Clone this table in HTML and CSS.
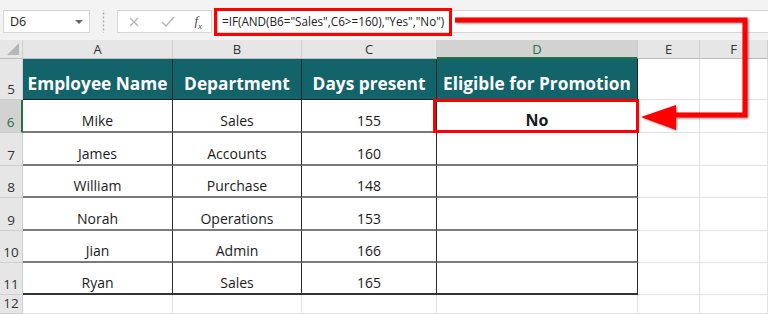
FILE: index.html
```html
<!DOCTYPE html>
<html>
<head>
<meta charset="utf-8">
<link rel="stylesheet" href="styles.css">
</head>
<body>
<div class="app">
  <div class="toolbar">
    <div class="namebox"><span>D6</span><span class="caret"></span></div>
    <div class="grip"></div>
    <div class="fnbox">
      <svg class="ico" width="14" height="14" viewBox="0 0 14 14"><path d="M3 3 L11 11 M11 3 L3 11" stroke="#b5b5b5" stroke-width="1.3" fill="none"/></svg>
      <svg class="ico" width="16" height="14" viewBox="0 0 16 14"><path d="M2 7 L6 11 L14 2" stroke="#b5b5b5" stroke-width="1.5" fill="none"/></svg>
      <span class="fx">f<sub>x</sub></span>
    </div>
    <div class="formula"><span class="hl">=IF(AND(B6="Sales",C6&gt;=160),"Yes","No")</span></div>
  </div>
  <div class="sheet">
    <div class="ch corner"><span class="tri"></span></div>
    <div class="ch">A</div><div class="ch">B</div><div class="ch">C</div><div class="ch sel">D</div><div class="ch">E</div><div class="ch">F</div>

    <div class="rh tall">5</div>
    <div class="hd">Employee Name</div><div class="hd">Department</div><div class="hd">Days present</div><div class="hd">Eligible for Promotion</div><div class="g"></div><div class="g"></div>

    <div class="rh rsel">6</div>
    <div class="td">Mike</div><div class="td">Sales</div><div class="td">155</div><div class="td res"><b>No</b></div><div class="g"></div><div class="g"></div>

    <div class="rh">7</div>
    <div class="td">James</div><div class="td">Accounts</div><div class="td">160</div><div class="td"></div><div class="g"></div><div class="g"></div>

    <div class="rh">8</div>
    <div class="td">William</div><div class="td">Purchase</div><div class="td">148</div><div class="td"></div><div class="g"></div><div class="g"></div>

    <div class="rh">9</div>
    <div class="td">Norah</div><div class="td">Operations</div><div class="td">153</div><div class="td"></div><div class="g"></div><div class="g"></div>

    <div class="rh">10</div>
    <div class="td">Jian</div><div class="td">Admin</div><div class="td">166</div><div class="td"></div><div class="g"></div><div class="g"></div>

    <div class="rh">11</div>
    <div class="td last">Ryan</div><div class="td last">Sales</div><div class="td last">165</div><div class="td last"></div><div class="g"></div><div class="g"></div>

    <div class="rh">12</div>
    <div class="g"></div><div class="g"></div><div class="g"></div><div class="g"></div><div class="g"></div><div class="g"></div>
  </div>
  <svg class="arrow" width="768" height="314" viewBox="0 0 768 314">
    <polyline points="455,20 745,20 745,115 672,115" fill="none" stroke="#ff0000" stroke-width="5" stroke-linejoin="miter"/>
    <polygon points="641,117 676,105 676,130" fill="#ff0000"/>
  </svg>
</div>
</body>
</html>
```

FILE: styles.css
```css
* { box-sizing: border-box; }
html, body { margin: 0; padding: 0; }
body { width: 768px; height: 314px; overflow: hidden; background: #fff; font-family: "Open Sans", "Liberation Sans", sans-serif; }
.app { position: relative; width: 768px; height: 314px; }

.toolbar { height: 40px; background: #f3f3f3; display: flex; align-items: flex-start; padding-top: 10px; padding-left: 3px; }
.namebox { width: 87px; height: 23px; background: #fff; border: 1px solid #d6d6d6; display: flex; align-items: center; justify-content: space-between; padding: 0 6px 0 6px; font-size: 12.5px; color: #222; }
.caret { width: 0; height: 0; border-left: 4px solid transparent; border-right: 4px solid transparent; border-top: 4px solid #666; }
.grip { width: 27px; height: 23px; background: radial-gradient(circle, #aaa 0.8px, transparent 1.2px) center/3px 4px repeat-y; }
.fnbox { width: 95px; height: 23px; background: #fff; border: 1px solid #d6d6d6; display: flex; align-items: center; justify-content: space-between; padding: 0 9px 0 9px; }
.fx { font-family: "Liberation Serif", serif; font-style: italic; font-size: 13px; color: #444; }
.fx sub { font-size: 9px; }
.formula { flex: 1; margin-left: 5px; height: 23px; background: #fff; border: 1px solid #d6d6d6; border-right: none; position: relative; }
.hl { position: absolute; left: -4px; top: -3px; height: 28px; width: 238px; border: 3px solid #ff0000; font-size: 11.7px; color: #222; padding-left: 5px; line-height: 21px; white-space: nowrap; }

.sheet { display: grid; grid-template-columns: 23px 150px 129px 135px 201px 62px 68px; grid-template-rows: 19px 41px 33px 33px 32px 33px 32px 32px 19px; }
.ch { background: #e6e6e6; border-right: 1px solid #cfcfcf; border-bottom: 1px solid #bdbdbd; text-align: center; font-size: 13px; line-height: 18px; color: #333; }
.ch.sel { background: #d2d2d2; color: #217346; border-bottom: 2px solid #217346; }
.corner { position: relative; }
.tri { position: absolute; right: 3px; bottom: 3px; width: 0; height: 0; border-left: 12px solid transparent; border-bottom: 12px solid #b7b7b7; }
.rh { background: #e6e6e6; border-right: 1px solid #cfcfcf; border-bottom: 1px solid #cfcfcf; display: flex; align-items: flex-end; justify-content: center; font-size: 13.5px; line-height: 1; color: #333; padding-bottom: 3px; }
.rh.rsel { background: #d2d2d2; color: #217346; border-right: 2px solid #217346; }
.hd { background: #12636a; color: #fff; font-weight: 700; font-size: 17.3px; line-height: 1; display: flex; align-items: center; justify-content: center; padding-top: 9px; border-right: 1px solid #1e2b2c; border-bottom: 1px solid #222; white-space: nowrap; }
.td { border-right: 1px solid #2a2a2a; border-bottom: 2px solid #7a7a7a; display: flex; align-items: flex-end; justify-content: center; font-size: 14px; line-height: 1; color: #1a1a1a; padding-bottom: 3px; }
.td.last { border-bottom: 2px solid #333; }
.td.res { position: relative; font-size: 16px; }
.td.res::after { content: ""; position: absolute; left: -4px; top: -1px; right: -2px; bottom: -2px; border: 3px solid #ff0000; }
.g { border-right: 1px solid #e1e1e1; border-bottom: 1px solid #e1e1e1; }

.arrow { position: absolute; left: 0; top: 0; pointer-events: none; filter: drop-shadow(1.5px 1.5px 1px rgba(0,0,0,0.45)); }
```
